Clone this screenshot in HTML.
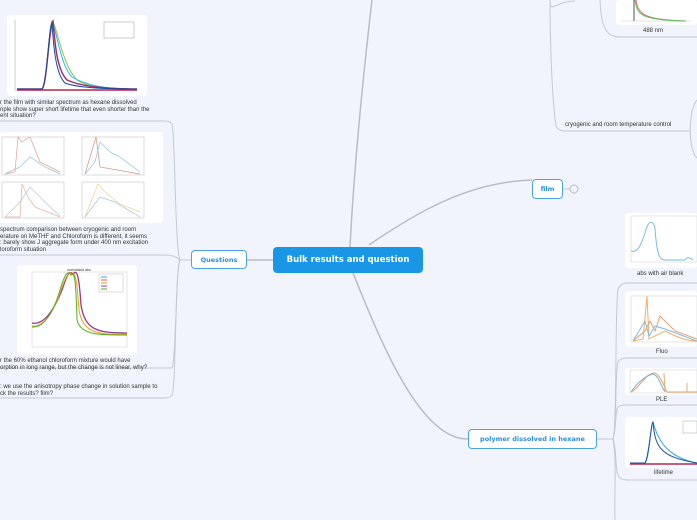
<!DOCTYPE html>
<html><head><meta charset="utf-8"><style>
body{margin:0;width:697px;height:520px;overflow:hidden;background:#f1f4fd;font-family:"Liberation Sans","DejaVu Sans",sans-serif;position:relative}
.t{position:absolute;font-size:6px;color:#333;line-height:6.6px;white-space:nowrap}
.img{position:absolute;background:#fff;border-radius:3px}
.node{position:absolute;box-sizing:border-box;display:flex;align-items:center;justify-content:center;font-weight:bold;color:#2a8ee0;background:#fff;border:1.5px solid #4aa2ea;border-radius:4px;font-family:"DejaVu Sans",sans-serif}
</style></head><body>
<svg width="697" height="520" style="position:absolute;left:0;top:0" fill="none" stroke="#c5c9d2" stroke-width="1">
<path d="M350 247 C355 150 365 60 372 0" stroke="#b8bcc4" stroke-width="1.5"/>
<path d="M369 245 C420 210 470 182 532 180" stroke="#b8bcc4" stroke-width="1.5"/>
<path d="M353 273 C380 340 420 440 468 439" stroke="#b8bcc4" stroke-width="1.5"/>
<path d="M273 260 L247 260" stroke="#b8bcc4" stroke-width="1.5"/>
<path d="M191 260 L180 260 C175 250 175 130 172 124 Q170 121 165 121 L0 121"/>
<path d="M180 260 C176 256 170 255 165 255 L0 255"/>
<path d="M180 260 C175 270 176 390 172 395 Q170 398 165 398 L0 398"/>
<path d="M180 260 C176 265 176 360 172 368 L0 368"/>
<path d="M563 189 L570 189"/><circle cx="574" cy="189" r="4" stroke="#bbb"/>
<path d="M550 0 C550 40 552 100 556 126 Q558 131 565 131 L690 131"/>
<path d="M550 0 C550 15 555 1 575 1" />
<path d="M600 0 C601 25 605 37 620 37 L697 37"/>
<path d="M697 100 C688 110 688 150 697 158"/>
<path d="M597 439 L613 439 C617 430 615 300 618 290 Q620 283 627 283 L697 283"/>
<path d="M613 439 C617 425 615 370 618 362 Q620 358 627 358 L697 358"/>
<path d="M613 439 C617 425 615 410 618 407 Q620 405 627 405 L697 405"/>
<path d="M613 439 C617 450 615 470 618 475 Q620 480 627 480 L697 480"/>
<path d="M613 439 C617 460 614 500 615 520"/>
</svg>
<!-- left images -->
<div class="img" style="left:7px;top:15px;width:140px;height:81px"><svg width="140" height="81"><g fill="none" stroke-width="1">
<path d="M8 75 L130 75" stroke="#ccc"/><path d="M8 5 L8 75" stroke="#ccc"/>
<path d="M10 74 L35 74 C40 70 42 10 45 6 C50 10 55 50 70 65 C80 72 100 74 130 74" stroke="#7ec850"/>
<path d="M10 74 L35 74 C40 70 42 10 45 8 C50 15 53 50 65 62 C80 71 100 74 130 74" stroke="#2cb4e8"/>
<path d="M10 74 L35 74 C40 70 42 10 46 6 C48 30 50 55 60 65 C75 72 100 74 130 74" stroke="#a0306a" stroke-width="1.5"/>
<path d="M10 74 L35 74 C40 70 42 10 45 8 C47 40 50 60 58 68 C70 73 100 74 130 74" stroke="#1a4aa0"/>
<path d="M10 75 L130 75" stroke="#c0204a" stroke-width="1.5"/>
<rect x="97" y="7" width="30" height="16" stroke="#999" stroke-width=".5"/></g></svg></div>
<div class="t" style="left:0;top:100px">r the film with similar spectrum as hexane dissolved<br>nple show super short lifetime that even shorter than the<br>ent situation?</div>
<div class="img" style="left:0;top:132px;width:163px;height:91px"><svg width="163" height="91" fill="none" stroke-width=".7">
<g stroke="#ccc"><rect x="2" y="5" width="62" height="38"/><rect x="82" y="5" width="62" height="38"/><rect x="2" y="50" width="62" height="36"/><rect x="82" y="50" width="62" height="36"/></g>
<path d="M5 42 L15 40 L18 5 L22 10 L30 5 L40 30 L60 40" stroke="#e0a090"/><path d="M5 42 L20 35 L30 25 L45 35 L60 42" stroke="#98c0d8"/>
<path d="M85 42 L95 30 L100 10 L110 20 L120 25 L140 40" stroke="#90c0e0"/><path d="M85 42 L96 5 L100 35 L140 42" stroke="#d09080"/>
<path d="M5 85 L20 85 L22 52 L28 65 L35 75 L60 85" stroke="#e0b0a0"/><path d="M5 85 L20 70 L30 55 L45 70 L60 84" stroke="#b0c8d8"/>
<path d="M85 85 L98 52 L105 60 L120 72 L140 80" stroke="#e8d090"/><path d="M85 85 L100 65 L115 70 L140 85" stroke="#a0c0e0"/>
</svg></div>
<div class="t" style="left:0;top:227px">spectrum comparison between cryogenic and room<br>erature on MeTHF and Chloroform is different, it seems<br>: barely show J aggregate form under 400 nm excitation<br>loroform situation</div>
<div class="img" style="left:17px;top:265px;width:120px;height:90px"><svg width="120" height="90" fill="none">
<text x="50" y="6" font-size="3.5" fill="#333" stroke="none">normalized abs</text>
<rect x="15" y="7" width="95" height="75" stroke="#ccc" stroke-width=".5"/>
<path d="M15 58 C25 60 35 50 45 25 C50 10 52 5 56 9 C60 4 62 10 64 40 C68 65 80 68 110 68" stroke="#9b3a8a" stroke-width="1.3"/>
<path d="M15 61 C25 62 35 52 44 25 C50 8 53 5 55 10 C58 5 60 15 62 45 C66 68 80 70 110 69" stroke="#e8a020" stroke-width="1"/>
<path d="M15 62 C25 63 35 52 43 25 C48 8 51 5 54 10 C58 5 59 20 60 55 C64 70 80 70 110 70" stroke="#50b020" stroke-width="1"/>
<rect x="82" y="9" width="24" height="18" fill="#fff" stroke="#bbb" stroke-width=".5"/>
<g stroke-width="1"><path d="M84 12h6" stroke="#3aa0e0"/><path d="M84 15h6" stroke="#e06030"/><path d="M84 18h6" stroke="#e8a020"/><path d="M84 21h6" stroke="#9b3a8a"/><path d="M84 24h6" stroke="#50b020"/></g>
</svg></div>
<div class="t" style="left:0;top:358px">r the 60% ethanol chloroform mixture would have<br>orption in long range, but the change is not linear, why?</div>
<div class="t" style="left:0;top:384px">: we use the anisotropy phase change in solution sample to<br>ck the results? film?</div>
<!-- nodes -->
<div class="node" style="left:273px;top:247px;width:150px;height:26px;background:#1a96e6;border-color:#1a96e6;color:#fff;font-size:8.5px">Bulk results and question</div>
<div class="node" style="left:191px;top:250px;width:56px;height:19px;font-size:6.5px">Questions</div>
<div class="node" style="left:532px;top:179px;width:31px;height:20px;font-size:6.5px">film</div>
<div class="node" style="left:468px;top:429px;width:129px;height:20px;font-size:6.5px">polymer dissolved in hexane</div>
<!-- right -->
<div class="img" style="left:616px;top:0;width:81px;height:25px"><svg width="81" height="25" fill="none"><path d="M5 21h70" stroke="#ccc" stroke-width=".5"/><path d="M20 0 C22 15 30 20 70 21" stroke="#e07070"/><path d="M19 0 C21 15 25 20 70 21" stroke="#60c060"/><path d="M18 0 L18 21" stroke="#555"/></svg></div>
<div class="t" style="left:643px;top:28px">488 nm</div>
<div class="t" style="left:565px;top:122px">cryogenic and room temperature control</div>
<div class="img" style="left:625px;top:213px;width:72px;height:55px"><svg width="72" height="55" fill="none"><rect x="6" y="3" width="66" height="46" stroke="#ccc" stroke-width=".5"/><path d="M6 38 C12 40 15 35 20 20 C24 5 28 8 30 15 C32 45 35 46 40 47 L60 47 C62 44 64 44 68 47" stroke="#7cb8e0"/></svg></div>
<div class="t" style="left:637px;top:271px">abs with air blank</div>
<div class="img" style="left:625px;top:291px;width:72px;height:56px"><svg width="72" height="56" fill="none"><rect x="6" y="5" width="66" height="46" stroke="#ccc" stroke-width=".5"/><path d="M8 50 L18 48 L22 5 L24 48 L40 40 C50 45 60 50 72 50" stroke="#f0b060"/><path d="M8 50 L20 40 L25 30 L30 40 L35 25 L50 40 L72 48" stroke="#e0a070"/><path d="M8 50 L20 30 L24 45 L30 35 L40 38 L72 50" stroke="#80b8e0"/></svg></div>
<div class="t" style="left:656px;top:349px">Fluo</div>
<div class="img" style="left:625px;top:368px;width:72px;height:27px"><svg width="72" height="27" fill="none"><rect x="5" y="2" width="67" height="23" stroke="#ccc" stroke-width=".5"/><path d="M6 24 C15 20 20 5 30 5 C35 8 38 15 42 24 L72 24" stroke="#e0a060"/><path d="M6 24 C12 15 20 8 28 6 C34 8 36 18 40 24" stroke="#80b0d0"/><path d="M39 5 L40 24 M62 15 L62 24" stroke="#e0b070"/></svg></div>
<div class="t" style="left:656px;top:397px">PLE</div>
<div class="img" style="left:625px;top:417px;width:72px;height:51px"><svg width="72" height="51" fill="none"><path d="M5 46 L20 46 C24 44 26 5 28 5 C32 20 40 40 72 46" stroke="#30b0d0"/><path d="M5 46 L20 46 C24 40 26 5 28 5 C30 30 35 40 72 46" stroke="#2050a0"/><path d="M5 47 L72 47" stroke="#c02050" stroke-width="1.5"/><rect x="58" y="4" width="14" height="12" stroke="#aaa" stroke-width=".5"/></svg></div>
<div class="t" style="left:654px;top:470px">lifetime</div>
</body></html>
